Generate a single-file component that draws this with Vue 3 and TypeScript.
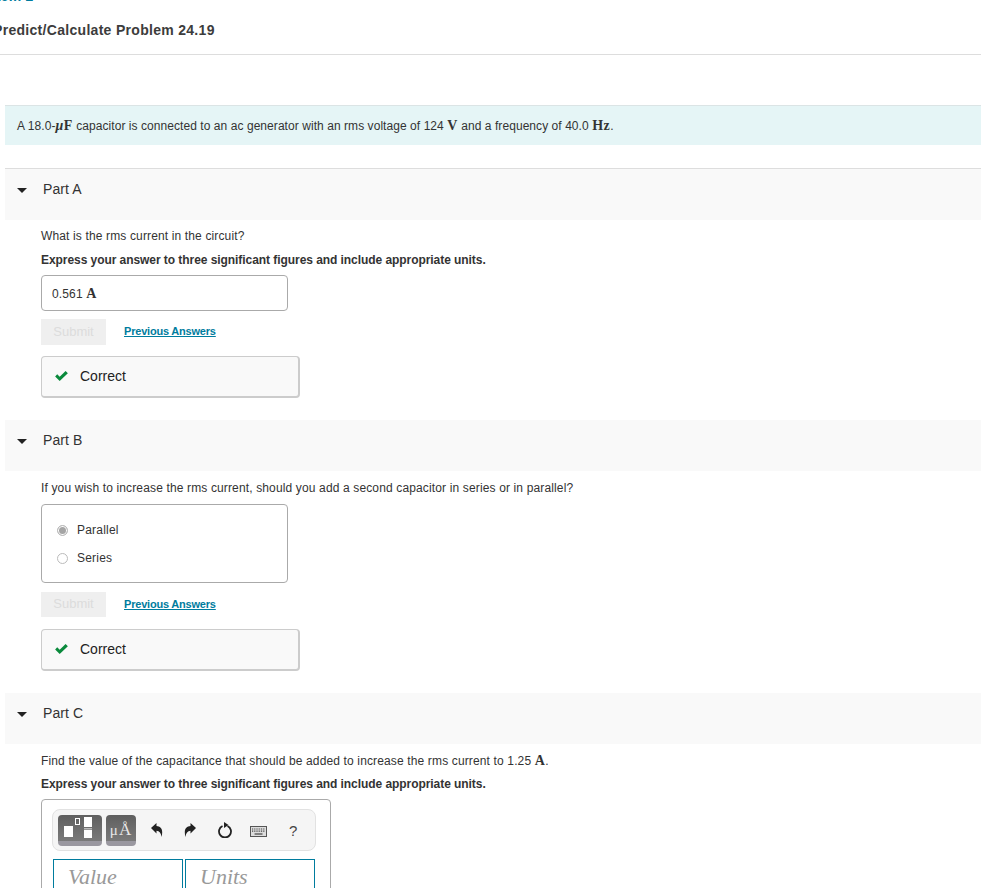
<script setup lang="ts">
interface Part { name: string }
const partA: Part = { name: 'Part A' }
const partB: Part = { name: 'Part B' }
const partC: Part = { name: 'Part C' }
</script>

<template>
  <div class="page">
    <div class="crumb">Item 2</div>
    <h1 class="title">Predict/Calculate Problem 24.19</h1>
    <div class="content">
      <div class="statement">
        A 18.0-<span class="m"><i>μ</i>F</span> capacitor is connected to an ac generator with an rms voltage of 124 <span class="m">V</span> and a frequency of 40.0 <span class="m">Hz</span>.
      </div>

      <section class="part part-a">
        <header class="part-head"><span class="tri"></span><span>{{ partA.name }}</span></header>
        <div class="part-body">
          <p class="q">What is the rms current in the circuit?</p>
          <p class="q b">Express your answer to three significant figures and include appropriate units.</p>
          <div class="answer">0.561 <span class="m">A</span></div>
          <div class="actions">
            <button class="submit" disabled>Submit</button>
            <a class="prev">Previous Answers</a>
          </div>
          <div class="correct">
            <svg class="check" viewBox="0 0 14 11"><path d="M0 6l2.300-2.300 2.700 2.700L11.500 0 14 2.400 5 11z" fill="#0a8a3c"/></svg>
            <span>Correct</span>
          </div>
        </div>
      </section>

      <section class="part part-b">
        <header class="part-head"><span class="tri"></span><span>{{ partB.name }}</span></header>
        <div class="part-body">
          <p class="q">If you wish to increase the rms current, should you add a second capacitor in series or in parallel?</p>
          <div class="options">
            <label class="opt"><span class="radio on"></span>Parallel</label>
            <label class="opt"><span class="radio"></span>Series</label>
          </div>
          <div class="actions">
            <button class="submit" disabled>Submit</button>
            <a class="prev">Previous Answers</a>
          </div>
          <div class="correct">
            <svg class="check" viewBox="0 0 14 11"><path d="M0 6l2.300-2.300 2.700 2.700L11.500 0 14 2.400 5 11z" fill="#0a8a3c"/></svg>
            <span>Correct</span>
          </div>
        </div>
      </section>

      <section class="part part-c">
        <header class="part-head"><span class="tri"></span><span>{{ partC.name }}</span></header>
        <div class="part-body">
          <p class="q">Find the value of the capacitance that should be added to increase the rms current to 1.25 <span class="m">A</span>.</p>
          <p class="q b">Express your answer to three significant figures and include appropriate units.</p>
          <div class="editor">
            <div class="toolbar">
              <div class="tool tool-wide">
                <svg viewBox="0 0 44 31" width="44" height="31">
                  <rect x="6" y="11" width="9" height="11" fill="#fff"/>
                  <rect x="17.500" y="3.500" width="4" height="6" fill="none" stroke="#fff"/>
                  <rect x="26" y="2" width="8" height="10" fill="#fff"/>
                  <rect x="26" y="13" width="8" height="1.500" fill="#bbb"/>
                  <rect x="26" y="15" width="8" height="8" fill="#fff"/>
                </svg>
              </div>
              <div class="tool tool-unit"><span class="mu">μ</span>Å</div>
              <svg class="ico ico-undo" viewBox="0 0 12 14"><path d="M0 5L5.500 0v3C10 3.200 12.500 6.500 10.500 14 10 10 8.500 8 5.500 7.800v2.700z" fill="#222"/></svg>
              <svg class="ico ico-redo" viewBox="0 0 12 14"><path d="M12 5L6.500 0v3C2 3.200-.5 6.500 1.500 14 2 10 3.500 8 6.500 7.800v2.700z" fill="#222"/></svg>
              <svg class="ico ico-reset" viewBox="0 0 14 16"><path d="M4.500 4A6 6 0 1 0 9.500 4" fill="none" stroke="#222" stroke-width="1.800"/><path d="M6 0l4.500 3L6 6z" fill="#222"/></svg>
              <svg class="ico ico-kbd" viewBox="0 0 17 11"><rect x=".5" y=".5" width="16" height="10" fill="#ddd" stroke="#555"/><path d="M2 3h13M2 5.200h13" stroke="#444" stroke-width="1.200" stroke-dasharray="1 .8"/><path d="M4.500 8h8" stroke="#444" stroke-width="1.200"/></svg>
              <span class="help">?</span>
            </div>
            <div class="fields">
              <div class="field">Value</div>
              <div class="field">Units</div>
            </div>
          </div>
        </div>
      </section>
    </div>
  </div>
</template>

<style scoped>
.page {
  width: 981px;
  height: 888px;
  overflow: hidden;
  font-family: "Liberation Sans", Arial, sans-serif;
  font-size: 12px;
  letter-spacing: 0.14px;
  color: #333;
  background: #fff;
}
.crumb {
  margin: -12px 0 0 -8px;
  height: 16px;
  line-height: 16px;
  font-size: 14px;
  font-weight: bold;
  color: #007c9e;
}
.title {
  margin: 0 0 0 -7px;
  height: 36px;
  padding-top: 14px;
  line-height: 24px;
  font-size: 14px;
  font-weight: bold;
  letter-spacing: 0.3px;
  color: #3c3c3c;
  border-bottom: 1px solid #ddd;
}
.content {
  margin-left: 5px;
  padding-top: 50px;
}
.statement {
  height: 39px;
  line-height: 39px;
  padding-left: 12px;
  letter-spacing: 0.06px;
  background: #e5f5f6;
  border-top: 1px solid #dbe4e5;
}
.m {
  font-family: "Liberation Serif", serif;
  font-weight: bold;
  font-size: 14px;
  letter-spacing: 0.5px;
  color: #333;
}
.part {
  margin-top: 22px;
}
.part-a {
  margin-top: 23px;
}
.part-head {
  display: flex;
  align-items: center;
  height: 51px;
  padding-bottom: 11px;
  box-sizing: border-box;
  font-size: 14px;
  letter-spacing: 0.1px;
  color: #333;
  background: #f9f9f9;
}
.part-a .part-head {
  height: 52px;
  border-top: 1px solid #ddd;
}
.tri {
  width: 0;
  height: 0;
  margin: 2px 16px 0 12px;
  border-left: 5px solid transparent;
  border-right: 5px solid transparent;
  border-top: 5px solid #222;
}
.part-body {
  padding: 10px 0 0 36px;
}
.part-a .part-body {
  padding-top: 9px;
}
.q {
  margin: 0;
  line-height: 14px;
  color: #333;
}
.q.b {
  margin-top: 9px;
  font-weight: bold;
  letter-spacing: -0.06px;
}
.part-a .q.b {
  margin-top: 10px;
}
.answer {
  box-sizing: border-box;
  width: 247px;
  height: 36px;
  margin-top: 8px;
  padding-left: 10px;
  line-height: 36px;
  border: 1px solid #aaa;
  border-radius: 4px;
}
.actions {
  display: flex;
  align-items: center;
  gap: 18px;
  margin-top: 8px;
  height: 26px;
}
.part-b .actions {
  margin-top: 9px;
  height: 25px;
}
.submit {
  width: 65px;
  height: 100%;
  padding: 0 0 2px;
  border: 0;
  background: #efefef;
  color: #dcdcdc;
  font: 13px "Liberation Sans", Arial, sans-serif;
}
.prev {
  padding-bottom: 2px;
  font-size: 11px;
  font-weight: bold;
  letter-spacing: -0.2px;
  color: #007c9e;
  text-decoration: underline;
}
.correct {
  box-sizing: border-box;
  display: flex;
  align-items: center;
  width: 259px;
  height: 42px;
  margin-top: 11px;
  padding: 0 0 1px 13px;
  font-size: 14px;
  letter-spacing: 0;
  color: #222;
  background: #f9f9f9;
  border: 1px solid #ccc;
  border-bottom-width: 2px;
  border-right-width: 2px;
  border-radius: 4px;
}
.part-b .correct {
  margin-top: 12px;
}
.check {
  width: 13px;
  height: 10px;
  margin-right: 12px;
}
.options {
  box-sizing: border-box;
  width: 247px;
  height: 79px;
  margin-top: 9px;
  padding-top: 11px;
  border: 1px solid #aaa;
  border-radius: 4px;
}
.opt {
  display: flex;
  align-items: center;
  height: 28px;
  padding-left: 15px;
  letter-spacing: 0.2px;
}
.radio {
  box-sizing: border-box;
  width: 11px;
  height: 11px;
  margin-right: 9px;
  border: 1px solid #bbb;
  border-radius: 50%;
  background: #fff;
}
.radio.on {
  background: #a5a5a5;
  box-shadow: inset 0 0 0 1px #fff;
}
.editor {
  box-sizing: border-box;
  width: 290px;
  height: 120px;
  margin-top: 8px;
  padding: 9px 10px;
  border: 1px solid #aaa;
  border-radius: 4px;
}
.toolbar {
  display: flex;
  align-items: center;
  box-sizing: border-box;
  width: 264px;
  height: 42px;
  padding-left: 5px;
  background: #f5f5f5;
  border: 1px solid #e2e2e2;
  border-radius: 8px;
}
.tool {
  height: 31px;
  background: linear-gradient(#5f5f5f, #7a7a7a 84%, #9a98a0 84%);
  border-radius: 4px;
  color: #fff;
}
.tool-wide { width: 44px; margin-right: 4px; }
.tool-unit {
  width: 30px;
  font-family: "Liberation Serif", serif;
  font-size: 17px;
  letter-spacing: 1px;
  line-height: 29px;
  text-align: center;
  color: #e8e8e8;
}
.mu { font-size: 15px; }
.ico { display: block; }
.ico-undo { width: 12px; height: 14px; margin-left: 15px; }
.ico-redo { width: 12px; height: 14px; margin-left: 21px; }
.ico-reset { width: 14px; height: 16px; margin-left: 22px; }
.ico-kbd { width: 17px; height: 11px; margin-left: 18px; margin-top: 2px; }
.help { margin-left: 22px; font-size: 15px; color: #444; letter-spacing: 0; }
.fields {
  display: flex;
  gap: 2px;
  margin: 8px 0 0 1px;
}
.field {
  box-sizing: border-box;
  width: 130px;
  height: 50px;
  padding-left: 14px;
  border: 1px solid #007c9e;
  font-family: "Liberation Serif", serif;
  font-style: italic;
  font-size: 22px;
  letter-spacing: 0;
  line-height: 34px;
  color: #999;
}
</style>
